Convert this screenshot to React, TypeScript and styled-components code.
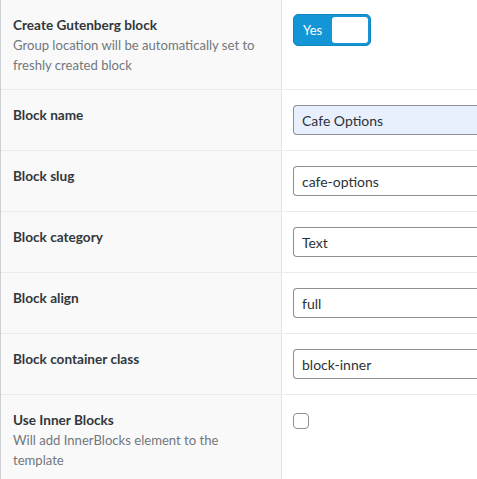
import React from "react";
import styled, { createGlobalStyle } from "styled-components";

const Global = createGlobalStyle`
  html, body { margin: 0; padding: 0; background: #fff; }
  body { font-family: "Segoe UI", Lato, "Noto Sans", sans-serif; font-size: 13px; color: #3c434a; }
  * { box-sizing: border-box; }
`;

const Table = styled.div`
  width: 477px;
  height: 479px;
  overflow: hidden;
  border-left: 1px solid #ccd0d4;
  display: flex;
  flex-direction: column;
`;

const Row = styled.div`
  display: grid;
  grid-template-columns: 281px 1fr;
  border-bottom: 1px solid #ebebeb;
  flex: none;
`;

const LabelCell = styled.div<{ $tall?: boolean }>`
  background: #f9f9f9;
  border-right: 1px solid #e1e1e1;
  padding: 15px 12px 14px 12px;
  min-height: ${(p) => (p.$tall ? "89px" : "60px")};
`;

const Label = styled.div`
  font-weight: 700;
  font-size: 13.6px;
  line-height: 20px;
  color: #32373c;
`;

const Desc = styled.div`
  font-size: 13.1px;
  line-height: 20px;
  color: #72777c;
`;

const InputCell = styled.div<{ $top?: number }>`
  padding: ${(p) => p.$top ?? 15}px 0 15px 11px;
  display: flex;
  align-items: flex-start;
`;

const TextInput = styled.div<{ $filled?: boolean }>`
  width: 220px;
  height: 30px;
  border: 1px solid #8c8f94;
  border-right: none;
  border-radius: 4px 0 0 4px;
  background: ${(p) => (p.$filled ? "#e8f0fe" : "#fff")};
  padding: 0 8px;
  display: flex;
  align-items: center;
  font-size: 14px;
  color: #2c3338;
  white-space: nowrap;
  flex: 1;
`;

const Switch = styled.div`
  width: 78px;
  height: 32px;
  border-radius: 5px;
  background: #1496d6;
  border: 1px solid #1287c2;
  display: flex;
  align-items: center;
  padding: 0 2px 0 9px;
  justify-content: space-between;
  color: #fff;
  font-size: 13px;
`;

const Knob = styled.div`
  width: 36px;
  height: 26px;
  border-radius: 3px;
  background: #fff;
`;

const Checkbox = styled.div`
  width: 16px;
  height: 16px;
  border: 1px solid #8c8f94;
  border-radius: 4px;
  background: #fff;
  margin-top: 3px;
`;

const fields = [
  { label: "Block name", value: "Cafe Options", filled: true },
  { label: "Block slug", value: "cafe-options" },
  { label: "Block category", value: "Text" },
  { label: "Block align", value: "full" },
  { label: "Block container class", value: "block-inner" },
];

export default function App() {
  return (
    <>
      <Global />
      <Table>
        <Row>
          <LabelCell $tall>
            <Label>Create Gutenberg block</Label>
            <Desc>
              Group location will be automatically set to
              <br />
              freshly created block
            </Desc>
          </LabelCell>
          <InputCell $top={14}>
            <Switch>
              <span>Yes</span>
              <Knob />
            </Switch>
          </InputCell>
        </Row>
        {fields.map((f) => (
          <Row key={f.label}>
            <LabelCell>
              <Label>{f.label}</Label>
            </LabelCell>
            <InputCell>
              <TextInput $filled={f.filled}>{f.value}</TextInput>
            </InputCell>
          </Row>
        ))}
        <Row>
          <LabelCell $tall>
            <Label>Use Inner Blocks</Label>
            <Desc>
              Will add InnerBlocks element to the
              <br />
              template
            </Desc>
          </LabelCell>
          <InputCell $top={15}>
            <Checkbox />
          </InputCell>
        </Row>
      </Table>
    </>
  );
}
